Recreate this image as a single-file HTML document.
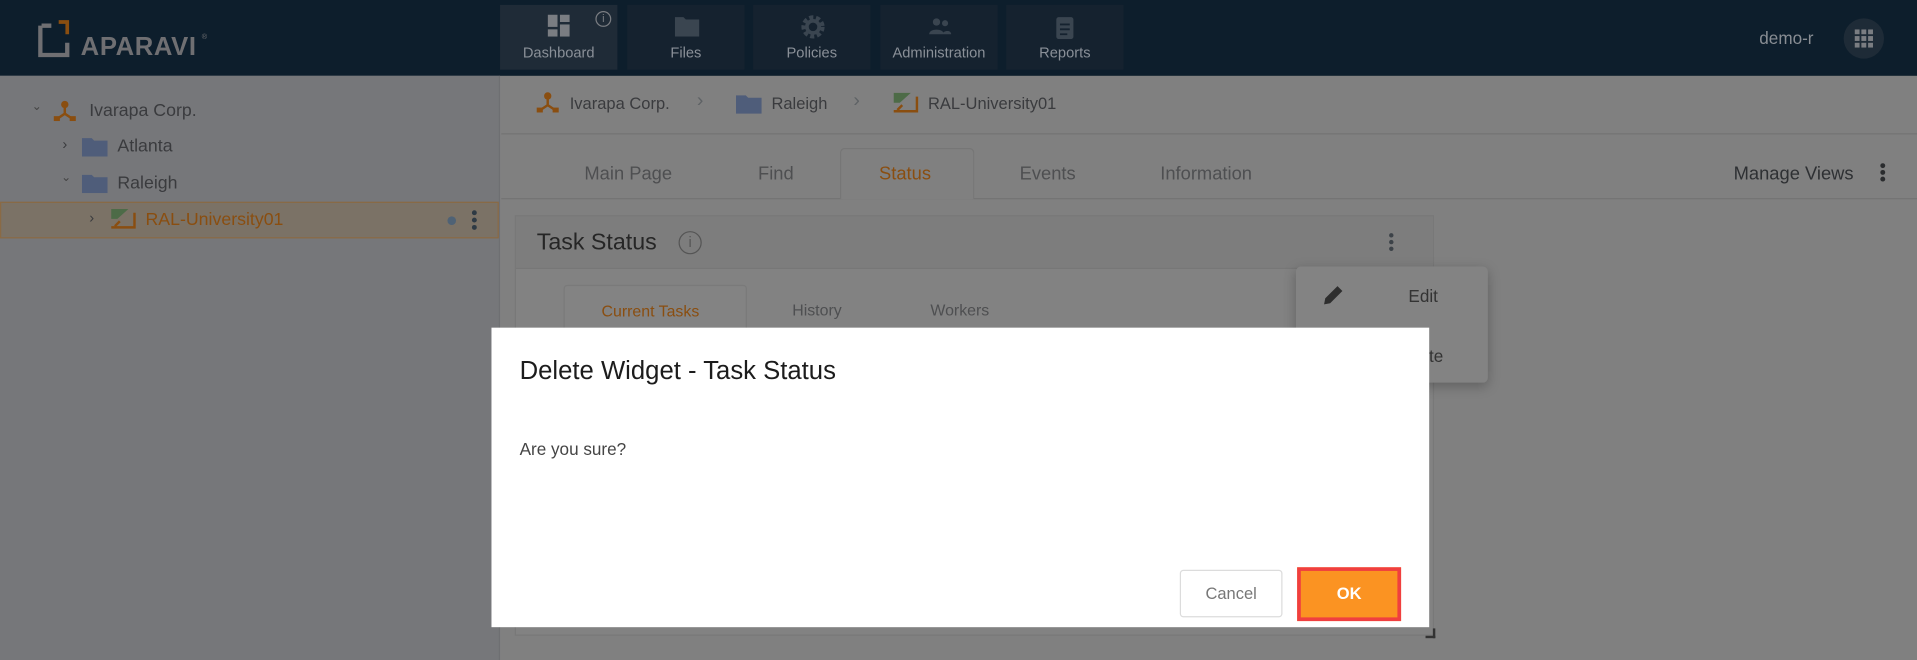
<!DOCTYPE html>
<html><head><meta charset="utf-8"><style>
*{box-sizing:border-box;margin:0;padding:0}
html,body{width:1917px;height:660px;overflow:hidden;background:#808080;font-family:"Liberation Sans",sans-serif}
#s{position:absolute;left:0;top:0;width:1568px;height:540px;transform:scale(1.22258);transform-origin:0 0;background:#808080}
.a{position:absolute}
.hdr{left:0;top:0;width:1568px;height:62px;background:#0d1e2c}
.nb{top:4px;width:96px;height:53px;background:#15222f;color:#8a9098;font-size:12px;text-align:center}
.nb span{position:absolute;left:0;right:0;top:32px}
.nb svg{position:absolute;left:39px;top:8px}
.side{left:0;top:62px;width:409px;height:478px;background:#76777a;border-right:1px solid #6e6f72}
.t{font-size:14.5px;color:#3a3b3e}
.tab{font-size:15px;color:#4e4f51}
</style></head><body><div id="s">
<div class="a hdr"></div>
<svg class="a" style="left:30px;top:15px" width="145" height="32" viewBox="0 0 145 32">
<path d="M3 6v24h22v-10" fill="none" stroke="#6f6f72" stroke-width="3.5"/>
<path d="M4 6h8" stroke="#6f6f72" stroke-width="3.5"/>
<path d="M18 3h7v10" fill="none" stroke="#8a4e10" stroke-width="3"/>
<text x="36" y="30" font-family="Liberation Sans" font-size="21" font-weight="bold" fill="#6f6f72" letter-spacing="0.5">APARAVI</text>
<text x="135" y="17" font-size="6" fill="#6f6f72">®</text>
</svg>
<div class="a nb" style="left:409px;background:#1f2b37"><svg width="18" height="18"><rect x="0" y="0" width="8" height="10" fill="#7a7d82"/><rect x="10" y="0" width="8" height="6" fill="#7a7d82"/><rect x="0" y="12" width="8" height="6" fill="#7a7d82"/><rect x="10" y="8" width="8" height="10" fill="#7a7d82"/></svg><span>Dashboard</span>
<div class="a" style="left:78px;top:5px;width:13px;height:13px;border:1px solid #7a7d82;border-radius:50%;font-size:9px;line-height:11px;color:#7a7d82">i</div></div>
<div class="a nb" style="left:513px"><svg width="20" height="18"><path d="M0 2h7l2 2h11v14H0z" fill="#3a4550"/></svg><span>Files</span></div>
<div class="a nb" style="left:616px"><svg width="20" height="20"><circle cx="10" cy="10" r="7" fill="none" stroke="#3a4550" stroke-width="5" stroke-dasharray="3 2"/><circle cx="10" cy="10" r="5" fill="none" stroke="#3a4550" stroke-width="3"/></svg><span>Policies</span></div>
<div class="a nb" style="left:720px"><svg width="20" height="18"><circle cx="7" cy="6" r="3" fill="#3a4550"/><circle cx="14" cy="7" r="2.5" fill="#3a4550"/><path d="M1 16c0-5 12-5 12 0zM12 16c0-3 7-4 7 0z" fill="#3a4550"/></svg><span>Administration</span></div>
<div class="a nb" style="left:823px"><svg width="18" height="20"><rect x="2" y="2" width="14" height="18" rx="2" fill="#3a4550"/><path d="M5 8h8M5 12h8M5 16h6" stroke="#15222f" stroke-width="1.5"/></svg><span>Reports</span></div>
<div class="a" style="left:1439px;top:23px;font-size:14px;color:#888d93">demo-r</div>
<div class="a" style="left:1508px;top:15px;width:33px;height:33px;border-radius:50%;background:#1e2b37"></div>
<svg class="a" style="left:1517px;top:24px" width="15" height="15"><g fill="#7a7d82"><rect x="0" y="0" width="4" height="4"/><rect x="5.5" y="0" width="4" height="4"/><rect x="11" y="0" width="4" height="4"/><rect x="0" y="5.5" width="4" height="4"/><rect x="5.5" y="5.5" width="4" height="4"/><rect x="11" y="5.5" width="4" height="4"/><rect x="0" y="11" width="4" height="4"/><rect x="5.5" y="11" width="4" height="4"/><rect x="11" y="11" width="4" height="4"/></g></svg>

<div class="a side"></div>
<div class="a t" style="left:26px;top:82px;font-size:10px;color:#444">⌄</div>
<svg class="a" style="left:43px;top:82px" width="20" height="18"><circle cx="10" cy="3.5" r="3" fill="#8a4e10"/><path d="M10 5v6L4 15M10 11l6 4" stroke="#8a4e10" stroke-width="2" fill="none"/><rect x="1" y="13" width="5" height="4" fill="#8a4e10"/><rect x="14" y="13" width="5" height="4" fill="#8a4e10"/></svg>
<div class="a t" style="left:73px;top:83px">Ivarapa Corp.</div>
<div class="a t" style="left:51px;top:111px;font-size:12px">›</div>
<svg class="a" style="left:67px;top:112px" width="21" height="16"><path d="M0 1h8l2 2h11v13H0z" fill="#4f5d7a"/></svg>
<div class="a t" style="left:96px;top:112px">Atlanta</div>
<div class="a t" style="left:50px;top:140px;font-size:10px;color:#444">⌄</div>
<svg class="a" style="left:67px;top:142px" width="21" height="16"><path d="M0 1h8l2 2h11v13H0z" fill="#4f5d7a"/></svg>
<div class="a t" style="left:96px;top:142px">Raleigh</div>
<div class="a" style="left:0;top:165px;width:408px;height:30px;background:#7b7266;border:1px solid #8a6a45"></div>
<div class="a t" style="left:73px;top:171px;font-size:12px">›</div>
<svg class="a" style="left:90px;top:170px" width="22" height="18"><path d="M1 1h14L6 9H1z" fill="#4d6b47"/><path d="M1 16h19V4" stroke="#8a4e10" stroke-width="2" fill="none"/><path d="M4 15l4-4" stroke="#8a4e10" stroke-width="2"/></svg>
<div class="a t" style="left:119px;top:172px;color:#8a4e10">RAL-University01</div>
<div class="a" style="left:366px;top:177px;width:7px;height:7px;border-radius:50%;background:#4f6275"></div>
<svg class="a" style="left:385px;top:171px" width="6" height="18"><g fill="#2e3a44"><circle cx="3" cy="3" r="2"/><circle cx="3" cy="9" r="2"/><circle cx="3" cy="15" r="2"/></g></svg>

<!-- breadcrumb -->
<div class="a" style="left:410px;top:109px;width:1158px;height:1px;background:#737373"></div>
<svg class="a" style="left:438px;top:75px" width="20" height="18"><circle cx="10" cy="3.5" r="3" fill="#8a4e10"/><path d="M10 5v6L4 15M10 11l6 4" stroke="#8a4e10" stroke-width="2" fill="none"/><rect x="1" y="13" width="5" height="4" fill="#8a4e10"/><rect x="14" y="13" width="5" height="4" fill="#8a4e10"/></svg>
<div class="a t" style="left:466px;top:77px;font-size:13.5px">Ivarapa Corp.</div>
<div class="a t" style="left:570px;top:74px;font-size:16px;color:#5e6265">›</div>
<svg class="a" style="left:602px;top:77px" width="21" height="16"><path d="M0 1h8l2 2h11v13H0z" fill="#4f5d7a"/></svg>
<div class="a t" style="left:631px;top:77px;font-size:13.5px">Raleigh</div>
<div class="a t" style="left:698px;top:74px;font-size:16px;color:#5e6265">›</div>
<svg class="a" style="left:730px;top:75px" width="22" height="18"><path d="M1 1h14L6 9H1z" fill="#4d6b47"/><path d="M1 16h19V4" stroke="#8a4e10" stroke-width="2" fill="none"/><path d="M4 15l4-4" stroke="#8a4e10" stroke-width="2"/></svg>
<div class="a t" style="left:759px;top:77px;font-size:13.5px">RAL-University01</div>

<!-- tabs -->
<div class="a" style="left:410px;top:162px;width:1158px;height:1px;background:#737373"></div>
<div class="a" style="left:687px;top:121px;width:110px;height:42px;background:#808080;border:1px solid #767676;border-bottom:none;border-radius:4px 4px 0 0"></div>
<div class="a tab" style="left:478px;top:134px">Main Page</div>
<div class="a tab" style="left:620px;top:134px">Find</div>
<div class="a tab" style="left:719px;top:134px;color:#8a4e10">Status</div>
<div class="a tab" style="left:834px;top:134px">Events</div>
<div class="a tab" style="left:949px;top:134px">Information</div>
<div class="a tab" style="left:1418px;top:134px;color:#2e3033">Manage Views</div>
<svg class="a" style="left:1537px;top:133px" width="6" height="16"><g fill="#2a2c2e"><circle cx="3" cy="2.5" r="2"/><circle cx="3" cy="8" r="2"/><circle cx="3" cy="13.5" r="2"/></g></svg>

<!-- widget -->
<div class="a" style="left:421px;top:176px;width:752px;height:344px;background:#828282;border:1px solid #787878"></div>
<div class="a" style="left:422px;top:177px;width:750px;height:43px;background:#7d7d7d;border-bottom:1px solid #777"></div>
<div class="a" style="left:439px;top:188px;font-size:19px;color:#262626">Task Status</div>
<div class="a" style="left:555px;top:189px;width:19px;height:19px;border:1.5px solid #555;border-radius:50%;font-size:12px;text-align:center;line-height:16px;color:#555">i</div>
<svg class="a" style="left:1135px;top:190px" width="6" height="16"><g fill="#3c4248"><circle cx="3" cy="2.5" r="1.8"/><circle cx="3" cy="8" r="1.8"/><circle cx="3" cy="13.5" r="1.8"/></g></svg>
<div class="a" style="left:461px;top:233px;width:150px;height:40px;background:#838383;border:1px solid #7a7a7a;border-radius:3px"></div>
<div class="a" style="left:492px;top:247px;font-size:13px;color:#8a4e10">Current Tasks</div>
<div class="a" style="left:648px;top:246px;font-size:13px;color:#4e4f51">History</div>
<div class="a" style="left:761px;top:246px;font-size:13px;color:#4e4f51">Workers</div>
<div class="a" style="left:1166px;top:514px;width:8px;height:8px;border-right:2px solid #333;border-bottom:2px solid #333"></div>

<!-- menu -->
<div class="a" style="left:1060px;top:218px;width:157px;height:95px;background:#838383;border-radius:4px;box-shadow:0 3px 10px rgba(0,0,0,0.25)"></div>
<svg class="a" style="left:1082px;top:232px" width="18" height="18"><path d="M1 17l1-5L12 2l4 4L6 16z" fill="#2e2e2e"/></svg>
<div class="a" style="left:1152px;top:234px;font-size:14px;color:#333">Edit</div>
<div class="a" style="left:1140px;top:283px;font-size:14px;color:#333">Delete</div>

<!-- dialog -->
<div class="a" style="left:402px;top:268px;width:767px;height:245px;background:#fff"></div>
<div class="a" style="left:425px;top:292px;font-size:21px;color:#1c1c1c">Delete Widget - Task Status</div>
<div class="a" style="left:425px;top:359px;font-size:14px;color:#444">Are you sure?</div>
<div class="a" style="left:965px;top:466px;width:84px;height:39px;border:1px solid #dcdcdc;border-radius:3px;font-size:13.5px;color:#777;text-align:center;line-height:37px">Cancel</div>
<div class="a" style="left:1061px;top:464px;width:85px;height:44px;border:3px solid #f03f3f;background:#fb9322;font-size:13.5px;font-weight:bold;color:#fff;text-align:center;line-height:38px">OK</div>
</div></body></html>
